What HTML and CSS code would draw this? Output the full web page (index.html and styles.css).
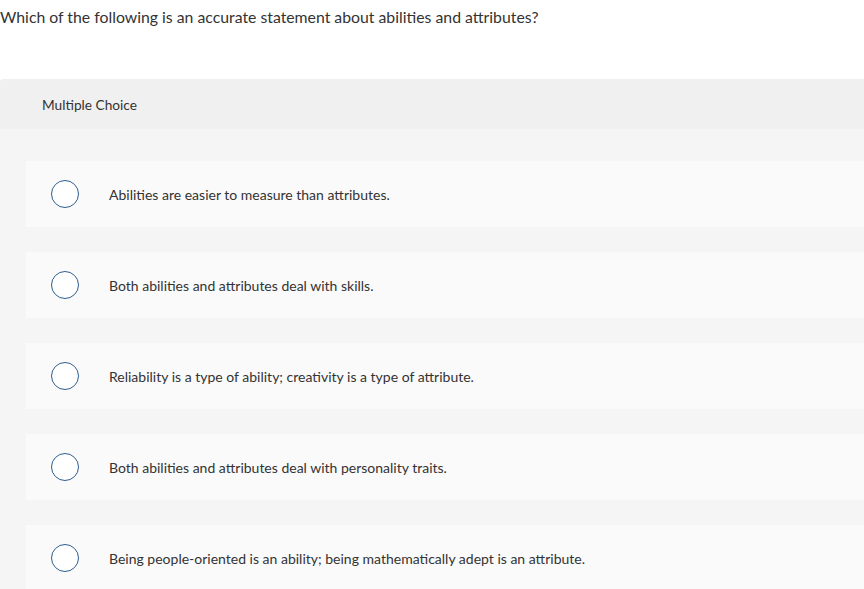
FILE: index.html
```html
<!DOCTYPE html>
<html>
<head>
<meta charset="utf-8">
<link rel="stylesheet" href="styles.css">
</head>
<body>
<div class="question">Which of the following is an accurate statement about abilities and attributes?</div>
<div class="panel">
  <div class="panel-head">Multiple Choice</div>
  <div class="choices">
    <div class="choice"><span class="radio"></span><span class="label">Abilities are easier to measure than attributes.</span></div>
    <div class="choice"><span class="radio"></span><span class="label">Both abilities and attributes deal with skills.</span></div>
    <div class="choice"><span class="radio"></span><span class="label">Reliability is a type of ability; creativity is a type of attribute.</span></div>
    <div class="choice"><span class="radio"></span><span class="label">Both abilities and attributes deal with personality traits.</span></div>
    <div class="choice"><span class="radio"></span><span class="label">Being people-oriented is an ability; being mathematically adept is an attribute.</span></div>
  </div>
</div>
</body>
</html>
```

FILE: styles.css
```css
html, body {
  margin: 0;
  padding: 0;
  background: #ffffff;
  font-family: Lato, "Open Sans", "Liberation Sans", sans-serif;
  color: #333333;
}
html {
  height: 589px;
  overflow: hidden;
}
body {
  height: 589px;
  display: flex;
  flex-direction: column;
  overflow: hidden;
}
.question {
  font-size: 15.8px;
  line-height: 20px;
  padding-top: 7px;
  height: 79px;
  flex-shrink: 0;
  box-sizing: border-box;
  color: #333333;
}
.panel {
  flex: 1;
  min-height: 0;
  background: #f5f5f5;
  border-radius: 4px 0 0 0;
  overflow: hidden;
}
.panel-head {
  background: #f0f0f0;
  height: 50px;
  display: flex;
  align-items: center;
  padding-left: 42px;
  font-size: 13.7px;
  color: #333333;
}
.choices {
  display: flex;
  flex-direction: column;
  gap: 25px;
  padding: 32px 0 0 26px;
}
.choice {
  background: #fafafa;
  height: 66px;
  display: flex;
  align-items: center;
  padding-left: 25px;
  flex-shrink: 0;
}
.radio {
  width: 28px;
  height: 28px;
  box-sizing: border-box;
  border: 1.5px solid #2d5e8e;
  border-radius: 50%;
  background: #ffffff;
  flex-shrink: 0;
}
.label {
  margin-left: 30px;
  font-size: 14px;
  color: #333333;
}
```
